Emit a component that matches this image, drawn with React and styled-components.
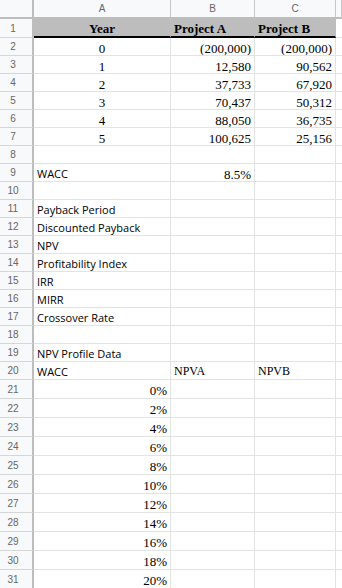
import React from "react";
import styled, { createGlobalStyle } from "styled-components";

const GlobalStyle = createGlobalStyle`
  html, body {
    margin: 0;
    padding: 0;
    background: #fff;
    overflow: hidden;
  }
`;

const rows = [
  { n: 1, a: "Year", b: "Project A", c: "Project B", kind: "head" },
  { n: 2, a: "0", b: "(200,000)", c: "(200,000)" },
  { n: 3, a: "1", b: "12,580", c: "90,562" },
  { n: 4, a: "2", b: "37,733", c: "67,920" },
  { n: 5, a: "3", b: "70,437", c: "50,312" },
  { n: 6, a: "4", b: "88,050", c: "36,735" },
  { n: 7, a: "5", b: "100,625", c: "25,156" },
  { n: 8 },
  { n: 9, a: "WACC", b: "8.5%", kind: "label" },
  { n: 10 },
  { n: 11, a: "Payback Period", kind: "label" },
  { n: 12, a: "Discounted Payback", kind: "label" },
  { n: 13, a: "NPV", kind: "label" },
  { n: 14, a: "Profitability Index", kind: "label" },
  { n: 15, a: "IRR", kind: "label" },
  { n: 16, a: "MIRR", kind: "label" },
  { n: 17, a: "Crossover Rate", kind: "label" },
  { n: 18 },
  { n: 19, a: "NPV Profile Data", kind: "label" },
  { n: 20, a: "WACC", b: "NPVA", c: "NPVB", kind: "npv" },
];

const rates = ["0%", "2%", "4%", "6%", "8%", "10%", "12%", "14%", "16%", "18%", "20%"];
rates.forEach((r, i) => rows.push({ n: 21 + i, a: r, kind: "rate" }));

const App = () => {
  return (
    <>
      <GlobalStyle />
      <Sheet>
        <Row $h={19}>
          <Corner />
          <ColLetter>A</ColLetter>
          <ColLetter>B</ColLetter>
          <ColLetter>C</ColLetter>
          <ColLetter />
        </Row>
        {rows.map((r) => {
          const h = r.n === 1 ? 19 : r.n <= 20 ? 18 : 19;
          const head = r.kind === "head";
          return (
            <Row key={r.n} $h={h}>
              <RowNum>{r.n}</RowNum>
              {head ? (
                <>
                  <Cell $head $font="bold" $align="center">{r.a}</Cell>
                  <Cell $head $font="bold">{r.b}</Cell>
                  <Cell $head $font="bold">{r.c}</Cell>
                </>
              ) : r.kind === "label" ? (
                <>
                  <Cell $font="sans">{r.a}</Cell>
                  <Cell $align="right">{r.b}</Cell>
                  <Cell />
                </>
              ) : r.kind === "npv" ? (
                <>
                  <Cell $font="sans">{r.a}</Cell>
                  <Cell $font="small">{r.b}</Cell>
                  <Cell $font="small">{r.c}</Cell>
                </>
              ) : r.kind === "rate" ? (
                <>
                  <Cell $align="right" $lift>{r.a}</Cell>
                  <Cell />
                  <Cell />
                </>
              ) : (
                <>
                  <Cell $align="center">{r.a}</Cell>
                  <Cell $align="right">{r.b}</Cell>
                  <Cell $align="right">{r.c}</Cell>
                </>
              )}
              <Spare />
            </Row>
          );
        })}
      </Sheet>
    </>
  );
};
export default App;

const Sheet = styled.div`
  width: 342px;
  height: 588px;
  overflow: hidden;
  display: flex;
  flex-direction: column;
`;

const Row = styled.div`
  display: grid;
  grid-template-columns: 34px 137px 84px 81px 1fr;
  height: ${(p) => p.$h}px;
  flex: none;
`;

const Corner = styled.div`
  background: #f8f9fa;
  border-right: 2px solid #bdbdbd;
  border-bottom: 2px solid #bdbdbd;
`;

const ColLetter = styled.div`
  background: #f8f9fa;
  border-right: 1px solid #c7c7c7;
  border-bottom: 2px solid #bdbdbd;
  display: flex;
  align-items: center;
  justify-content: center;
  font-family: "Liberation Sans", Arial, sans-serif;
  font-size: 10px;
  color: #666;
`;

const RowNum = styled.div`
  background: #f8f9fa;
  border-right: 2px solid #bdbdbd;
  border-bottom: 1px solid #d6d6d6;
  display: flex;
  align-items: center;
  justify-content: center;
  padding-right: 6px;
  font-family: "Liberation Sans", Arial, sans-serif;
  font-size: 10px;
  color: #666;
`;

const fonts = {
  serif: `font-family: "Liberation Serif", "Times New Roman", serif; font-size: 13px; line-height: 13px;`,
  bold: `font-family: "Liberation Serif", "Times New Roman", serif; font-size: 13px; line-height: 13px; font-weight: bold; padding-bottom: 1px;`,
  sans: `font-family: "Open Sans", sans-serif; font-size: 11px; line-height: 11px; padding-bottom: 2px;`,
  small: `font-family: "Liberation Serif", "Times New Roman", serif; font-size: 12px; line-height: 12px; padding-bottom: 2px;`,
};

const Cell = styled.div`
  box-sizing: border-box;
  display: flex;
  align-items: flex-end;
  justify-content: ${(p) =>
    p.$align === "right" ? "flex-end" : p.$align === "center" ? "center" : "flex-start"};
  padding-left: 3px;
  padding-right: 3px;
  white-space: nowrap;
  overflow: hidden;
  color: #000;
  background: ${(p) => (p.$head ? "#bdbdbd" : "#fff")};
  border-right: 1px solid ${(p) => (p.$head ? "#bdbdbd" : "#e2e3e3")};
  border-bottom: ${(p) => (p.$head ? "2px solid #000" : "1px solid #e2e3e3")};
  ${(p) => fonts[p.$font || "serif"]}
  ${(p) => p.$lift && "padding-bottom: 1px;"}
`;

const Spare = styled.div`
  border-bottom: 1px solid #e2e3e3;
`;
